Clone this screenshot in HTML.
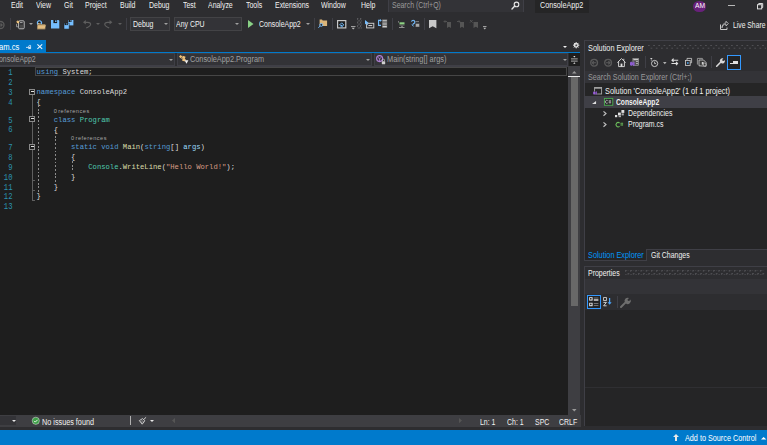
<!DOCTYPE html>
<html><head><meta charset="utf-8">
<style>
*{margin:0;padding:0;box-sizing:border-box}
html,body{width:767px;height:445px;overflow:hidden;background:#2d2d30;font-family:"Liberation Sans",sans-serif;color:#f1f1f1;position:relative}
.a{position:absolute}
.t{position:absolute;white-space:nowrap;font-size:8.4px;line-height:10px;transform:scaleX(.83);transform-origin:0 0}
.m{position:absolute;white-space:nowrap;font-family:"Liberation Mono",monospace;font-size:7.2px;line-height:9.9px;margin-top:2.5px}
svg{position:absolute;overflow:visible}
.cb{position:absolute;left:29px;width:6px;height:6px;border:1px solid #8a8a8a;background:#1e1e1e}
.cb:after{content:"";position:absolute;left:.7px;top:1.4px;width:3.2px;height:1.1px;background:#e0e0e0}
.ig{position:absolute;width:1px;background:repeating-linear-gradient(to bottom,#8c8c8c 0,#8c8c8c 1.8px,transparent 1.8px,transparent 3.7px)}
.ln{left:0;width:12.5px;text-align:right;color:#2b91af;font-size:8.2px;transform:scaleX(.88);transform-origin:100% 0;margin-top:2px}
.code{left:36.5px;color:#dcdcdc;margin-top:2.1px}
.cl{position:absolute;white-space:nowrap;font-size:5.6px;letter-spacing:.5px;word-spacing:-1.2px;line-height:7.55px;color:#a6a6a6;margin-top:1.8px}
.sep{position:absolute;width:1px;background:#3f3f46}
.dd{position:absolute;width:0;height:0;border-left:2px solid transparent;border-right:2px solid transparent;border-top:2.2px solid #a0a0a0}
.grip{position:absolute;height:4.4px;background:radial-gradient(circle at .7px .7px,#4f4f53 .7px,transparent .9px) 0 0/5.2px 4.4px,radial-gradient(circle at .7px .7px,#4f4f53 .7px,transparent .9px) 2.6px 3.1px/5.2px 4.4px}
</style></head><body>

<!-- ============ MENU BAR ============ -->
<div class="t" style="left:11px;top:0.2px">Edit</div>
<div class="t" style="left:35.5px;top:0.2px">View</div>
<div class="t" style="left:63.5px;top:0.2px">Git</div>
<div class="t" style="left:85px;top:0.2px">Project</div>
<div class="t" style="left:120px;top:0.2px">Build</div>
<div class="t" style="left:149px;top:0.2px">Debug</div>
<div class="t" style="left:183px;top:0.2px">Test</div>
<div class="t" style="left:207.5px;top:0.2px">Analyze</div>
<div class="t" style="left:245.5px;top:0.2px">Tools</div>
<div class="t" style="left:274.5px;top:0.2px">Extensions</div>
<div class="t" style="left:321px;top:0.2px">Window</div>
<div class="t" style="left:360.5px;top:0.2px">Help</div>

<!-- search box -->
<div class="a" style="left:388px;top:0;width:136px;height:12px;background:#333337;border-left:1px solid #3f3f46;border-right:1px solid #3f3f46"></div>
<div class="t" style="left:391.5px;top:0.2px;color:#9a9a9a">Search (Ctrl+Q)</div>
<svg style="left:511px;top:1px" width="9" height="9" viewBox="0 0 9 9"><circle cx="5.5" cy="3.4" r="2.3" fill="none" stroke="#e6e6e6" stroke-width="1.1"/><line x1="3.8" y1="5.1" x2="1" y2="7.9" stroke="#e6e6e6" stroke-width="1.4" stroke-linecap="round"/></svg>
<div class="a" style="left:535px;top:0;width:54px;height:12.5px;background:#252526"></div>
<div class="t" style="left:540px;top:0.2px;transform:scaleX(.86)">ConsoleApp2</div>

<!-- avatar & window buttons -->
<div class="a" style="left:693.2px;top:.5px;width:12.6px;height:11.8px;border-radius:50%;background:#68217a"></div>
<div class="t" style="left:694.6px;top:1.3px;font-size:7.4px;color:#fff;transform:scaleX(.9)">AM</div>
<div class="a" style="left:728.3px;top:5px;width:6.5px;height:.9px;background:#b8b8b8"></div>
<svg style="left:757px;top:3px" width="6.2" height="6.4" viewBox="0 0 6.2 6.4"><rect x=".5" y="1.7" width="4.2" height="4.2" fill="none" stroke="#dcdcdc" stroke-width="1"/><path d="M1.7 1.7V.5h4v4H4.7" fill="none" stroke="#dcdcdc" stroke-width="1"/></svg>


<!-- ============ TOOLBAR ============ -->
<svg style="left:-4px;top:20.5px" width="9" height="8" viewBox="0 0 9 8"><circle cx="4.5" cy="4" r="3.5" fill="none" stroke="#5a5a5a" stroke-width="1.3"/><path d="M2.6 4h3.2M4.6 2.4L6.2 4 4.6 5.6" fill="none" stroke="#5a5a5a" stroke-width="1.1"/></svg>
<div class="sep" style="left:10.2px;top:18px;height:11.8px"></div>
<!-- new project -->
<svg style="left:15.8px;top:19.8px" width="9" height="9.2" viewBox="0 0 9 9.2"><rect x="2.6" y=".8" width="5.6" height="8" rx="1" fill="#2d2d30" stroke="#c8c8c8" stroke-width=".9"/><rect x="3.6" y="4.6" width="3.6" height="3.3" fill="#4a4a4a"/><path d="M4 2.6h2.6" stroke="#c8c8c8" stroke-width=".8"/><path d="M1.9 0l.6 1.2 1.3.2-.9.9.2 1.3-1.2-.6-1.2.6.2-1.3-.9-.9 1.3-.2z" fill="#f5c77e"/><path d="M.6 4v2.8h1.6" fill="none" stroke="#b0b0b0" stroke-width=".8"/></svg>
<div class="dd" style="left:29px;top:23px"></div>
<!-- open folder -->
<svg style="left:36.8px;top:19.8px" width="9.2" height="9.2" viewBox="0 0 9.2 9.2"><path d="M0 3h3.2l.7 .9h4.3v5.3H0z" fill="#dcb67a"/><path d="M.4 4.7h8.8l-1 4.5H0z" fill="#e3bd80" stroke="#2d2d30" stroke-width=".5"/><path d="M1 4.4A2.1 2.1 0 1 1 4.4 3.6" fill="none" stroke="#75beff" stroke-width="1.1"/><path d="M3.3 2.6l2.1 .2-1 1.8z" fill="#75beff"/><circle cx="2.6" cy="2.6" r=".8" fill="#1b1b1c"/></svg>
<!-- save -->
<svg style="left:50.7px;top:19.7px" width="8.3" height="8.4" viewBox="0 0 8.3 8.4"><path d="M0 0h7.5l.8 .8v7.6H0z" fill="#75beff"/><path d="M2.4 0h3.7v3.1H2.4z" fill="#1b1b1c"/><rect x="4.1" y=".4" width="1.4" height="1.6" fill="#75beff"/></svg>
<!-- save all -->
<svg style="left:63.9px;top:19.6px" width="9.4" height="9.2" viewBox="0 0 9.4 9.2"><path d="M4 0h5.4v5.4H4z" fill="#75beff"/><path d="M4.5 0h3v2H4.5z" fill="#1b1b1c"/><rect x="6.2" y=".3" width="1" height="1.1" fill="#75beff"/><path d="M0 3.1h5.2v6H0z" fill="#75beff" stroke="#1b1b1c" stroke-width=".5"/><path d="M.6 3.1h3.4v2H.6z" fill="#1b1b1c"/><rect x="2.3" y="3.4" width="1" height="1.1" fill="#75beff"/></svg>
<!-- undo / redo -->
<svg style="left:82.7px;top:19.8px" width="8.4" height="8.2" viewBox="0 0 8.4 8.2"><path d="M1.4 2.3H4.6C6.9 2.3 7.8 3.3 7.6 4.5 7.4 5.7 5.8 6.8 3.2 8" fill="none" stroke="#5e5e5e" stroke-width="1.2"/><path d="M0 2.3L2.8 0v4.6z" fill="#5e5e5e"/></svg>
<div class="dd" style="left:96.3px;top:23.2px;border-top-color:#5e5e5e"></div>
<svg style="left:104.4px;top:19.8px" width="8.4" height="8.2" viewBox="0 0 8.4 8.2"><path d="M7 2.3H3.8C1.5 2.3 .6 3.3 .8 4.5 1 5.7 2.6 6.8 5.2 8" fill="none" stroke="#5e5e5e" stroke-width="1.2"/><path d="M8.4 2.3L5.6 0v4.6z" fill="#5e5e5e"/></svg>
<div class="dd" style="left:117.8px;top:23.2px;border-top-color:#5e5e5e"></div>
<div class="sep" style="left:126.3px;top:18px;height:11.8px"></div>

<!-- Debug combo -->
<div class="a" style="left:130px;top:17px;width:40px;height:14px;background:#333337;border:1px solid #434346"></div>
<div class="t" style="left:133px;top:18.9px">Debug</div>
<div class="dd" style="left:164px;top:23.4px"></div>
<div class="a" style="left:174px;top:17px;width:67.5px;height:14px;background:#333337;border:1px solid #434346"></div>
<div class="t" style="left:176.3px;top:18.9px">Any CPU</div>
<div class="dd" style="left:235.3px;top:23.4px"></div>
<!-- start -->
<svg style="left:247.8px;top:20px" width="5.5" height="8.1" viewBox="0 0 5.5 8.1"><path d="M0 0L5.5 4.05 0 8.1z" fill="#89d185"/></svg>
<div class="t" style="left:258.5px;top:18.9px">ConsoleApp2</div>
<div class="dd" style="left:305.8px;top:23.4px"></div>
<div class="sep" style="left:314px;top:18px;height:11.8px"></div>
<!-- find in files folder -->
<svg style="left:318.2px;top:19.2px" width="9.2" height="9.2" viewBox="0 0 9.2 9.2"><path d="M1.6 .6h2.4l.7.8h4.4v5.5H1.6z" fill="#dcb67a"/><circle cx="3.3" cy="5.9" r="1.5" fill="#2d2d30" stroke="#75beff" stroke-width=".9"/><path d="M2.2 7L.4 8.8" stroke="#75beff" stroke-width="1"/></svg>
<div class="sep" style="left:332.2px;top:18px;height:11.8px"></div>
<svg style="left:336.6px;top:19.9px" width="9.4" height="8.5" viewBox="0 0 9.4 8.5"><rect x=".6" y=".6" width="8.2" height="7.3" fill="#1e1e1e" stroke="#c8c8c8" stroke-width="1.2"/><path d="M2.6 5l2.1-2.2L6.8 5 4.7 7z" fill="none" stroke="#75beff" stroke-width=".9"/><circle cx="4.7" cy="5.6" r=".8" fill="#75beff"/></svg>
<svg style="left:350.5px;top:25.6px" width="4.5" height="4.2" viewBox="0 0 4.5 4.2"><rect x="0" y="0" width="4.5" height=".8" fill="#bbb"/><path d="M.6 1.8h3.3L2.25 3.6z" fill="#bbb"/></svg>
<div class="a" style="left:357px;top:17.8px;width:4.6px;height:11.4px;background:radial-gradient(circle at .7px .7px,#5a5a5e .7px,transparent .9px) 0 0/3px 3.6px,radial-gradient(circle at .7px .7px,#5a5a5e .7px,transparent .9px) 1.5px 1.8px/3px 3.6px"></div>
<svg style="left:364.7px;top:19.7px" width="9.4" height="8.5" viewBox="0 0 9.4 8.5"><rect x="1.6" y="3.3" width="7.2" height="4.6" fill="#2d2d30" stroke="#c8c8c8" stroke-width="1"/><rect x="3.4" y="5" width="3.8" height="1.1" fill="#c8c8c8"/><path d="M0 0v4.6l1.3-1.1 1 1.6 .8-.5-1-1.5h1.7z" fill="#75beff"/></svg>
<svg style="left:377.8px;top:19.2px" width="9.4" height="9" viewBox="0 0 9.4 9"><rect x="4.2" y=".3" width="5" height="8.5" fill="#6a6a6a"/><rect x="4.6" y="1.2" width="4.2" height="1" fill="#c8c8c8"/><rect x="4.6" y="3.6" width="4.2" height="2.6" fill="#9a9a9a"/><rect x="4.6" y="7" width="4.2" height="1.3" fill="#cfcfcf"/><path d="M2.4 1.4H.6v5H3" fill="none" stroke="#75beff" stroke-width="1.1"/><path d="M2 0l1.8 1.4L2 2.8z" fill="#75beff"/></svg>
<div class="sep" style="left:392.2px;top:18px;height:11.8px"></div>
<svg style="left:398px;top:20.5px" width="6.5" height="7" viewBox="0 0 6.5 7"><rect x="0" y=".4" width="1" height="1" fill="#aaa"/><rect x="1.5" y="1.3" width="5" height="2.2" fill="#8ed483"/><rect x="1.5" y="3.8" width="5" height="1" fill="#5a5a5a"/><rect x="3" y="4.8" width="2" height="1.2" fill="#777"/><rect x="1" y="6" width="5.5" height=".8" fill="#aaa"/></svg>
<svg style="left:410.8px;top:20px" width="8.5" height="7.5" viewBox="0 0 8.5 7.5"><path d="M.5 1.6A1.7 1.7 0 1 1 2.8 3.6L1.6 4.6" fill="none" stroke="#75beff" stroke-width="1.1"/><rect x="4.5" y="1.2" width="3.5" height=".9" fill="#888"/><rect x="4.5" y="3.5" width="4" height="3.5" fill="#777"/><rect x="5" y="4" width="3" height="2.5" fill="#a8a8a8"/><path d="M1 4.6l1.5 1.8" stroke="#75beff" stroke-width="1"/></svg>
<div class="sep" style="left:424px;top:18px;height:11.8px"></div>
<svg style="left:429px;top:19.8px" width="7.4" height="8.2" viewBox="0 0 7.4 8.2"><path d="M0 0h7.4v8.2L3.7 6.2 0 8.2z" fill="#c8c8c8"/></svg>
<svg style="left:444px;top:20px" width="7" height="8" viewBox="0 0 7 8"><path d="M3 2h4v6L5 6.8 3 8z" fill="#555"/><path d="M0 1.5h3M1.2 .3L0 1.5l1.2 1.2" fill="none" stroke="#555" stroke-width=".9"/></svg>
<svg style="left:457px;top:20px" width="7" height="8" viewBox="0 0 7 8"><path d="M3 2h4v6L5 6.8 3 8z" fill="#555"/><path d="M0 1.5h3M1.8 .3L3 1.5 1.8 2.7" fill="none" stroke="#555" stroke-width=".9"/></svg>
<svg style="left:469.5px;top:20px" width="8" height="8" viewBox="0 0 8 8"><path d="M3.5 2h4.5v6L5.75 6.8 3.5 8z" fill="#555"/><path d="M0 0l2.6 2.6M2.6 0L0 2.6" fill="none" stroke="#555" stroke-width=".9"/></svg>
<svg style="left:483.2px;top:25.6px" width="3.5" height="4" viewBox="0 0 3.5 4"><rect x="0" y="0" width="3.5" height=".8" fill="#bbb"/><path d="M.3 1.7h2.9L1.75 3.4z" fill="#bbb"/></svg>

<!-- live share -->
<svg style="left:719.8px;top:20.9px" width="8.5" height="9" viewBox="0 0 8.5 9"><path d="M.5 3.5v5h6.5V6.5" fill="none" stroke="#c8c8c8" stroke-width="1"/><path d="M2 6.8c.3-2.4 1.8-3.6 4-3.6V5l2.3-2.4L6 .2V2C3.5 2 2.2 4 2 6.8z" fill="none" stroke="#c8c8c8" stroke-width=".8"/></svg>
<div class="t" style="left:732.8px;top:19.9px;transform:scaleX(.81)">Live Share</div>

<!-- ============ TAB ROW ============ -->
<div class="a" style="left:-10px;top:40px;width:56px;height:12px;background:#007acc"></div>
<div class="t" style="left:-0.6px;top:41.6px;color:#fff;transform:scaleX(.91)">am.cs</div>
<svg style="left:26px;top:45px" width="5" height="4" viewBox="0 0 5 4"><path d="M0 2.4h2.3" stroke="#cfe5f6" stroke-width=".9"/><path d="M2.6 1.1L3.3 .4h1.3v3.2H2.6z" fill="#2f8ad6" stroke="#d8ebf8" stroke-width=".8"/><rect x="2.6" y="2.2" width="2" height="1.4" fill="#e0f0fb"/></svg>
<svg style="left:37.1px;top:44.1px" width="5.6" height="5.2" viewBox="0 0 5.6 5.2"><path d="M.4 .3l4.8 4.6M5.2 .3L.4 4.9" stroke="#f0f6fb" stroke-width="1.05"/></svg>
<div class="a" style="left:0;top:52px;width:580.2px;height:1.1px;background:#007acc"></div>
<div class="dd" style="left:563px;top:45.6px;border-top-color:#f0f0f0;border-left-width:2.1px;border-right-width:2.1px;border-top-width:2.2px"></div>
<svg style="left:573px;top:42.4px" width="6.4" height="6.4" viewBox="0 0 6.4 6.4"><circle cx="3.2" cy="3.2" r="1.9" fill="none" stroke="#e0e0e0" stroke-width="1.2"/><path d="M3.2 0v6.4M0 3.2h6.4M.9 .9l4.6 4.6M5.5 .9L.9 5.5" stroke="#e0e0e0" stroke-width=".9"/><circle cx="3.2" cy="3.2" r=".8" fill="#2d2d30"/></svg>

<!-- ============ NAV BAR ============ -->
<div class="a" style="left:0;top:53px;width:568px;height:12.6px;background:#2d2d30"></div>
<div class="a" style="left:-1px;top:53.2px;width:176px;height:12.4px;background:#333337;border:1px solid #3f3f46"></div>
<div class="a" style="left:177px;top:53.2px;width:194.5px;height:12.4px;background:#333337;border:1px solid #3f3f46"></div>
<div class="a" style="left:373.6px;top:53.2px;width:194.4px;height:12.4px;background:#333337;border:1px solid #3f3f46"></div>
<div class="t" style="left:-1px;top:54.4px;color:#a0a0a0">onsoleApp2</div>
<div class="dd" style="left:169.4px;top:59.3px"></div>
<svg style="left:178.8px;top:55px" width="9.4" height="8.8" viewBox="0 0 9.4 8.8"><path d="M1.6 0L3.3 1.6 1.6 3.3 0 1.6z" fill="#f0c27a"/><path d="M3.2 1.2h3v2.6h-3z" fill="#f0c27a" transform="rotate(20 4.7 2.5)"/><path d="M3.4 3.8h3.2v2.4H3.4z" fill="#f0c27a" transform="rotate(15 5 5)"/><path d="M1.6 2.4L3.6 4.2" stroke="#f0c27a" stroke-width=".8"/><path d="M5.6 5.2h3.8L7.5 8.8z" fill="#f0f0f0"/></svg>
<div class="t" style="left:190px;top:54.4px;color:#a0a0a0;transform:scaleX(.874)">ConsoleApp2.Program</div>
<div class="dd" style="left:366px;top:59.3px"></div>
<svg style="left:375.8px;top:54.8px" width="9.2" height="9.2" viewBox="0 0 9.2 9.2"><circle cx="3.6" cy="3.6" r="3" fill="none" stroke="#b180d7" stroke-width="1.1"/><path d="M1.8 2.4l1.8 1.2 1.8-1.2M3.6 3.6v2.5" stroke="#b180d7" stroke-width=".9" fill="none"/><rect x="5.8" y="6.2" width="3.4" height="3" rx=".5" fill="#d0d0d0"/><path d="M6.5 6.2v-1a1 1 0 0 1 2 0v1" fill="none" stroke="#d0d0d0" stroke-width=".7"/></svg>
<div class="t" style="left:386.7px;top:54.4px;color:#a0a0a0;transform:scaleX(.88)">Main(string[] args)</div>
<div class="dd" style="left:562.8px;top:59.3px"></div>
<div class="a" style="left:569px;top:53px;width:11px;height:12.6px;background:#1e1e1e"></div>
<svg style="left:570.8px;top:55.6px" width="6.7" height="7.8" viewBox="0 0 6.7 7.8"><path d="M0 2.9h6.7M0 5.1h6.7" stroke="#e8e8e8" stroke-width=".7"/><path d="M2.2 0h2.3L3.35 1.5zM2.2 7.8h2.3L3.35 6.3z" fill="#e8e8e8"/></svg>

<!-- ============ EDITOR ============ -->
<div class="a" style="left:0;top:65.6px;width:568px;height:1px;background:#3f3f46"></div>
<div class="a" style="left:0;top:66.6px;width:568px;height:348.4px;background:#1e1e1e"></div>
<!-- current line box -->
<div class="a" style="left:35.2px;top:66.8px;width:532px;height:9.6px;border:1px solid #464646"></div>

<!-- line numbers -->
<div class="m ln" style="top:66.40px">1</div>
<div class="m ln" style="top:76.30px">2</div>
<div class="m ln" style="top:86.20px">3</div>
<div class="m ln" style="top:96.10px">4</div>
<div class="m ln" style="top:113.55px">5</div>
<div class="m ln" style="top:123.45px">6</div>
<div class="m ln" style="top:140.90px">7</div>
<div class="m ln" style="top:150.80px">8</div>
<div class="m ln" style="top:160.70px">9</div>
<div class="m ln" style="top:170.60px">10</div>
<div class="m ln" style="top:180.50px">11</div>
<div class="m ln" style="top:190.40px">12</div>
<div class="m ln" style="top:200.30px">13</div>
<!-- code -->
<div class="m code" style="top:66.40px"><span style="color:#569cd6">using</span>&#160;System;</div>
<div class="m code" style="top:86.20px"><span style="color:#569cd6">namespace</span>&#160;ConsoleApp2</div>
<div class="m code" style="top:96.10px">{</div>
<div class="m code" style="top:113.55px">&#160;&#160;&#160;&#160;<span style="color:#569cd6">class</span>&#160;<span style="color:#4ec9b0">Program</span></div>
<div class="m code" style="top:123.45px">&#160;&#160;&#160;&#160;{</div>
<div class="m code" style="top:140.90px">&#160;&#160;&#160;&#160;&#160;&#160;&#160;&#160;<span style="color:#569cd6">static</span>&#160;<span style="color:#569cd6">void</span>&#160;<span style="color:#dcdcaa">Main</span>(<span style="color:#569cd6">string</span>[]&#160;<span style="color:#9cdcfe">args</span>)</div>
<div class="m code" style="top:150.80px">&#160;&#160;&#160;&#160;&#160;&#160;&#160;&#160;{</div>
<div class="m code" style="top:160.70px">&#160;&#160;&#160;&#160;&#160;&#160;&#160;&#160;&#160;&#160;&#160;&#160;<span style="color:#4ec9b0">Console</span>.<span style="color:#dcdcaa">WriteLine</span>(<span style="color:#d69d85">&quot;Hello&#160;World!&quot;</span>);</div>
<div class="m code" style="top:170.60px">&#160;&#160;&#160;&#160;&#160;&#160;&#160;&#160;}</div>
<div class="m code" style="top:180.50px">&#160;&#160;&#160;&#160;}</div>
<div class="m code" style="top:190.40px">}</div>
<div class="cl" style="left:53.8px;top:106.00px">0 references</div>
<div class="cl" style="left:71.1px;top:133.35px">0 references</div>

<!-- outlining margin -->
<div class="a" style="left:32px;top:94px;width:1px;height:106.8px;background:#5f5f5f"></div>
<div class="a" style="left:32px;top:180px;width:3px;height:1px;background:#5f5f5f"></div>
<div class="a" style="left:32px;top:190px;width:3px;height:1px;background:#5f5f5f"></div>
<div class="a" style="left:32px;top:200px;width:3px;height:1px;background:#5f5f5f"></div>
<div class="cb" style="top:88.6px"></div>
<div class="cb" style="top:116px"></div>
<div class="cb" style="top:143.8px"></div>
<!-- indent guides -->
<div class="ig" style="left:38px;top:105px;height:88px"></div>
<div class="ig" style="left:55px;top:132px;height:51px"></div>
<div class="ig" style="left:72px;top:161px;height:9px"></div>

<!-- scrollbar -->
<div class="a" style="left:568px;top:66px;width:12.3px;height:349px;background:#3e3e42"></div>
<svg style="left:571.9px;top:70.5px" width="4.6" height="2.6" viewBox="0 0 4.6 2.6"><path d="M0 2.6L2.3 0 4.6 2.6z" fill="#999"/></svg>
<div class="a" style="left:568px;top:75.8px;width:12.3px;height:1.3px;background:#e8e8e8"></div>
<div class="a" style="left:570.8px;top:77.2px;width:7px;height:229px;background:#686868"></div>
<svg style="left:571.8px;top:408.8px" width="4.6" height="2.6" viewBox="0 0 4.6 2.6"><path d="M0 0L2.3 2.6 4.6 0z" fill="#999"/></svg>
<div class="a" style="left:580.3px;top:53px;width:3.7px;height:377px;background:#2d2d30"></div>

<!-- bottom bar -->
<div class="a" style="left:0;top:414.8px;width:580.5px;height:11.8px;background:#3e3e42"></div>
<div class="a" style="left:0;top:415.6px;width:16.3px;height:9.8px;background:#333337"></div>
<div class="dd" style="left:11.7px;top:419.8px;border-top-color:#e8e8e8"></div>
<svg style="left:32px;top:417px" width="7.6" height="7.6" viewBox="0 0 7.6 7.6"><circle cx="3.8" cy="3.8" r="3.6" fill="#3c9e46" stroke="#e8e8e8" stroke-width=".5"/><path d="M2.1 3.9l1.2 1.2 2.3-2.3" fill="none" stroke="#fff" stroke-width=".9"/></svg>
<div class="t" style="left:41.7px;top:416.7px;transform:scaleX(.866)">No issues found</div>
<div class="a" style="left:129.5px;top:416.3px;width:1px;height:8.5px;background:#b0b0b0"></div>
<svg style="left:138.9px;top:416.7px" width="7.4" height="7.4" viewBox="0 0 7.4 7.4"><path d="M7.1 .3L4.6 2.6" stroke="#dedede" stroke-width=".9"/><path d="M.3 3.6L3.6 1.6 5.8 3.8 3.2 7.2z" fill="#3e3e42" stroke="#dedede" stroke-width=".85"/><path d="M1.6 4.2l1.8 2M2.8 3.2l1.9 2" stroke="#dedede" stroke-width=".6"/></svg>
<div class="dd" style="left:149.5px;top:419.8px;border-top-color:#e8e8e8"></div>
<svg style="left:172px;top:418.3px" width="3" height="5.2" viewBox="0 0 3 5.2"><path d="M3 0v5.2L0 2.6z" fill="#555"/></svg>
<svg style="left:459px;top:418.3px" width="3" height="5.2" viewBox="0 0 3 5.2"><path d="M0 0v5.2L3 2.6z" fill="#555"/></svg>
<div class="t" style="left:480.4px;top:416.7px">Ln: 1</div>
<div class="t" style="left:506.5px;top:416.7px">Ch: 1</div>
<div class="t" style="left:534.5px;top:416.7px">SPC</div>
<div class="t" style="left:558.5px;top:416.7px">CRLF</div>

<!-- ============ STATUS BAR ============ -->
<div class="a" style="left:0;top:429.7px;width:767px;height:15.3px;background:#007acc"></div>
<svg style="left:673.2px;top:434px" width="6" height="7" viewBox="0 0 6 7"><path d="M3 0L6 3H4v4H2V3H0z" fill="#e8e8e8"/></svg>
<div class="t" style="left:685px;top:432.8px;color:#fff;transform:scaleX(.865)">Add to Source Control</div>
<svg style="left:760.7px;top:436.6px" width="5.3" height="2.6" viewBox="0 0 5.3 2.6"><path d="M0 2.6L2.65 0 5.3 2.6z" fill="#fff"/></svg>

<!-- ============ SOLUTION EXPLORER ============ -->
<div class="a" style="left:584px;top:40px;width:184px;height:209px;background:#252526;border-left:1px solid #3f3f46;border-top:1px solid #3f3f46"></div>
<div class="a" style="left:585px;top:41px;width:182px;height:30px;background:#2d2d30"></div>
<div class="t" style="left:587.5px;top:42.8px;transform:scaleX(.874)">Solution Explorer</div>
<div class="grip" style="left:648px;top:44.6px;width:118px"></div>
<!-- toolbar -->
<svg style="left:590px;top:58.7px" width="8.2" height="7.4" viewBox="0 0 8.2 7.4"><circle cx="4.1" cy="3.7" r="3.4" fill="none" stroke="#5a5a5a" stroke-width="1.3"/><path d="M6.2 3.7H2.2M3.8 2.1L2.2 3.7l1.6 1.6" fill="none" stroke="#5a5a5a" stroke-width="1.1"/></svg>
<svg style="left:603.6px;top:58.7px" width="8.2" height="7.4" viewBox="0 0 8.2 7.4"><circle cx="4.1" cy="3.7" r="3.4" fill="none" stroke="#5a5a5a" stroke-width="1.3"/><path d="M2 3.7h4M4.4 2.1l1.6 1.6-1.6 1.6" fill="none" stroke="#5a5a5a" stroke-width="1.1"/></svg>
<svg style="left:616.9px;top:57.9px" width="9" height="9" viewBox="0 0 9 9"><path d="M.4 4.6L4.5.6l4.1 4M1.6 3.6v5h5.8v-5" fill="none" stroke="#e0e0e0" stroke-width=".9"/><rect x="3.6" y="5.6" width="1.8" height="3" fill="#e0e0e0"/><path d="M6.8 .8v2" stroke="#e0e0e0" stroke-width=".9"/></svg>
<svg style="left:630.2px;top:58.3px" width="9" height="8.2" viewBox="0 0 9 8.2"><rect x="2.9" y=".3" width="5.8" height="7" fill="#555" stroke="#aaa" stroke-width=".6"/><rect x="3.4" y="1" width="4.8" height="1.2" fill="#ccc"/><rect x="6" y="3" width="2" height="1" fill="#aaa"/><rect x="6" y="5" width="2" height="1" fill="#aaa"/><path d="M0 4.6l1.2-1 2 1.5V3.4l1.3 .6v3.6l-1.3.6V6.4l-2 1.5L0 7z" fill="#8c5ccf"/></svg>
<div class="sep" style="left:644.6px;top:56.1px;height:11.9px"></div>
<svg style="left:650.2px;top:57.9px" width="8.2" height="9.1" viewBox="0 0 8.2 9.1"><circle cx="4.6" cy="5.5" r="3.1" fill="none" stroke="#d8d8d8" stroke-width=".9"/><path d="M4.6 3.6v2h1.5" fill="none" stroke="#d8d8d8" stroke-width=".8"/><path d="M0 0h2.6L1.3 1.6z" fill="#d8d8d8"/><path d="M1.3 1.4v1.4" stroke="#d8d8d8" stroke-width=".6"/></svg>
<svg style="left:662.6px;top:61.8px" width="3.6" height="2.2" viewBox="0 0 3.6 2.2"><path d="M0 0h3.6L1.8 2.2z" fill="#b0b0b0"/></svg>
<svg style="left:671px;top:58.4px" width="7.6" height="7.7" viewBox="0 0 7.6 7.7"><path d="M7.2 2.2H1.2M2.6 .6L1 2.2l1.6 1.6M.4 5.5h6M5 3.9l1.6 1.6L5 7.1" fill="none" stroke="#e0e0e0" stroke-width="1.1"/></svg>
<svg style="left:684.9px;top:57.9px" width="7" height="7.9" viewBox="0 0 7 7.9"><path d="M2 2.2v-1.8h4.6v4.4H5" fill="none" stroke="#d0d0d0" stroke-width=".8"/><rect x=".4" y="2.6" width="4.8" height="4.8" fill="#2d2d30" stroke="#d0d0d0" stroke-width=".8"/><rect x="2" y="4.2" width="1.6" height="1.6" fill="#4a9fe8"/></svg>
<svg style="left:697.2px;top:57.9px" width="9.6" height="8.7" viewBox="0 0 9.6 8.7"><path d="M.4 6.6V.4h5v1" fill="none" stroke="#aaa" stroke-width=".8"/><path d="M2 7.8V2h4.6l2.5 2.5v3.8z" fill="#3a3a3a" stroke="#d0d0d0" stroke-width=".8"/><rect x="4.8" y="4" width="1.8" height="2.6" fill="#d0d0d0"/><circle cx="7.8" cy="6.6" r="1.6" fill="none" stroke="#bbb" stroke-width=".7"/></svg>
<div class="sep" style="left:711px;top:56.2px;height:11.7px"></div>
<svg style="left:716px;top:58.1px" width="9.1" height="8.9" viewBox="0 0 9.1 8.9"><path d="M.7 8.2L4.6 4.3" stroke="#d8d8d8" stroke-width="1.6" stroke-linecap="round"/><path d="M4.2 4.4a2.6 2.6 0 0 1 3.2-3.8L6.2 1.8l.3 1 1 .3 1.2-1.2a2.6 2.6 0 0 1-3.8 3.2z" fill="#d8d8d8"/></svg>
<div class="a" style="left:727.1px;top:55.1px;width:14px;height:14.8px;border:1px solid #3399ff;background:#232324"></div>
<div class="a" style="left:730px;top:63.2px;width:8.1px;height:.8px;background:#e0e0e0"></div>
<div class="a" style="left:732.9px;top:61.1px;width:5.2px;height:2.6px;background:#e0e0e0"></div>

<!-- search -->
<div class="a" style="left:585px;top:71.3px;width:182px;height:12.2px;background:#333337"></div>
<div class="t" style="left:588px;top:72.4px;color:#999;transform:scaleX(.86)">Search Solution Explorer (Ctrl+;)</div>

<!-- tree -->
<svg style="left:593px;top:87.1px" width="9" height="8" viewBox="0 0 9 8"><rect x="1.6" y=".5" width="7" height="6.5" fill="#252526" stroke="#a8a8a8" stroke-width=".9"/><rect x="1.6" y=".5" width="7" height="1.2" fill="#a8a8a8"/><path d="M0 5l1-.8 1.8 1.3V3.9l1.2 .6v3l-1.2 .5V6.5L1 7.8 0 7z" fill="#9b5fe0" stroke="#252526" stroke-width=".3"/></svg>
<div class="t" style="left:605.1px;top:86px;transform:scaleX(.877)">Solution 'ConsoleApp2' (1 of 1 project)</div>
<div class="a" style="left:585px;top:96.2px;width:182px;height:11.4px;background:#3f3f46"></div>
<svg style="left:591.7px;top:101px" width="4.1" height="3.1" viewBox="0 0 4.1 3.1"><path d="M4.1 0v3.1H0z" fill="#e0e0e0"/></svg>
<svg style="left:603.8px;top:98px" width="9.2" height="7.7" viewBox="0 0 9.2 7.7"><rect x=".4" y=".4" width="8.4" height="6.9" fill="#2a2a2c" stroke="#4caf50" stroke-width=".9"/><path d="M3.6 2.5a1.5 1.5 0 1 0 0 2.6" fill="none" stroke="#d0d0d0" stroke-width=".8"/><path d="M4.6 3h2.6M4.6 4.4h2.6M5.4 2v3.6M6.4 2v3.6" stroke="#bbb" stroke-width=".5"/></svg>
<div class="t" style="left:616px;top:97px;font-weight:bold;transform:scaleX(.8)">ConsoleApp2</div>
<svg style="left:602.5px;top:110.9px" width="3.6" height="5.1" viewBox="0 0 3.6 5.1"><path d="M.5 .4l2.5 2.15L.5 4.7" fill="none" stroke="#c0c0c0" stroke-width="1.15"/></svg>
<svg style="left:614.9px;top:109.8px" width="9.3" height="7.2" viewBox="0 0 9.3 7.2"><rect x="0" y="5" width="2.2" height="2.2" fill="#e0e0e0"/><rect x="3" y="2.6" width="2.8" height="2.8" fill="#e0e0e0"/><rect x="6.4" y="0" width="2.9" height="2.9" fill="#e0e0e0"/><rect x="3.6" y="5.6" width="2.4" height="1.6" fill="#aaa"/><rect x="6.6" y="3.4" width="2.2" height="2" fill="#aaa"/></svg>
<div class="t" style="left:627.6px;top:108.2px">Dependencies</div>
<svg style="left:602.5px;top:121.7px" width="3.6" height="5.1" viewBox="0 0 3.6 5.1"><path d="M.5 .4l2.5 2.15L.5 4.7" fill="none" stroke="#c0c0c0" stroke-width="1.15"/></svg>
<svg style="left:615.8px;top:121.7px" width="7.4" height="5.2" viewBox="0 0 7.4 5.2"><path d="M3.6 1a2.2 2.2 0 1 0 0 3.4" fill="none" stroke="#6cbf5b" stroke-width="1.1"/><path d="M4.4 1.4h2.8M4.4 3h2.8M5.2 .6v3.2M6.4 .6v3.2" stroke="#6cbf5b" stroke-width=".55"/></svg>
<div class="t" style="left:627.6px;top:118.8px">Program.cs</div>

<!-- tabs -->
<div class="a" style="left:584px;top:249px;width:183px;height:12.7px;background:#2d2d30"></div>
<div class="a" style="left:584px;top:248.8px;width:62.5px;height:12px;background:#252526;border-left:1px solid #3f3f46;border-right:1px solid #3f3f46;border-bottom:1px solid #3f3f46"></div>
<div class="a" style="left:646.5px;top:248.8px;width:121px;height:1px;background:#3f3f46"></div>
<div class="t" style="left:587.6px;top:250.3px;color:#0097fb;transform:scaleX(.874)">Solution Explorer</div>
<div class="t" style="left:651px;top:250.3px">Git Changes</div>

<!-- ============ PROPERTIES ============ -->
<div class="a" style="left:584px;top:265.6px;width:184px;height:160.4px;background:#252526;border-left:1px solid #3f3f46;border-top:1px solid #3f3f46"></div>
<div class="a" style="left:585px;top:266.6px;width:182px;height:12.4px;background:#2d2d30"></div>
<div class="t" style="left:587.6px;top:268.4px">Properties</div>
<div class="grip" style="left:625.4px;top:270.4px;width:140px"></div>
<div class="a" style="left:585px;top:279px;width:182px;height:14.8px;background:#333337"></div>
<div class="a" style="left:585px;top:293.8px;width:182px;height:16.7px;background:#2d2d30"></div>
<div class="a" style="left:586.6px;top:295.1px;width:14.4px;height:13.6px;border:1px solid #3399ff;background:#232324"></div>
<svg style="left:588.6px;top:296.8px" width="10" height="10" viewBox="0 0 10 10"><rect x=".2" y=".2" width="3.4" height="3.4" fill="#e8e8e8"/><rect x="1" y="1" width="1.6" height="1.6" fill="#333"/><rect x=".2" y="5.8" width="3.4" height="3.4" fill="#e8e8e8"/><rect x="1" y="6.6" width="1.6" height="1.6" fill="#333"/><rect x="4.8" y=".6" width="4.6" height=".8" fill="#888"/><rect x="4.8" y="2.2" width="4.6" height="1.6" fill="#ccc"/><rect x="4.8" y="6.2" width="4.6" height=".8" fill="#888"/><rect x="4.8" y="8" width="4.6" height=".8" fill="#888"/></svg>
<svg style="left:602.9px;top:296.6px" width="9.5" height="9.5" viewBox="0 0 9.5 9.5"><rect x=".2" y=".2" width="3.6" height="3.6" fill="#ddd"/><rect x="1" y="1" width="2" height="2" fill="#333"/><path d="M.4 5.4h3L.6 8.8h3" fill="none" stroke="#ddd" stroke-width=".9"/><path d="M6.6 1v5.6" stroke="#4aa6ff" stroke-width="1.2"/><path d="M4.6 5.2l2 2.6 2-2.6z" fill="#4aa6ff"/></svg>
<div class="sep" style="left:616.8px;top:295.5px;height:12.5px"></div>
<svg style="left:620px;top:296.6px" width="11" height="11" viewBox="0 0 11 11"><path d="M1 10L5.6 5.4" stroke="#6e6e6e" stroke-width="2" stroke-linecap="round"/><path d="M5 5.6a3.2 3.2 0 0 1 4-4.6L7.5 2.5l.4 1.2 1.2.4 1.5-1.5a3.2 3.2 0 0 1-4.6 4z" fill="#6e6e6e"/></svg>

<div class="a" style="left:585px;top:386.5px;width:182px;height:1px;background:#2f2f32"></div>
</body></html>
